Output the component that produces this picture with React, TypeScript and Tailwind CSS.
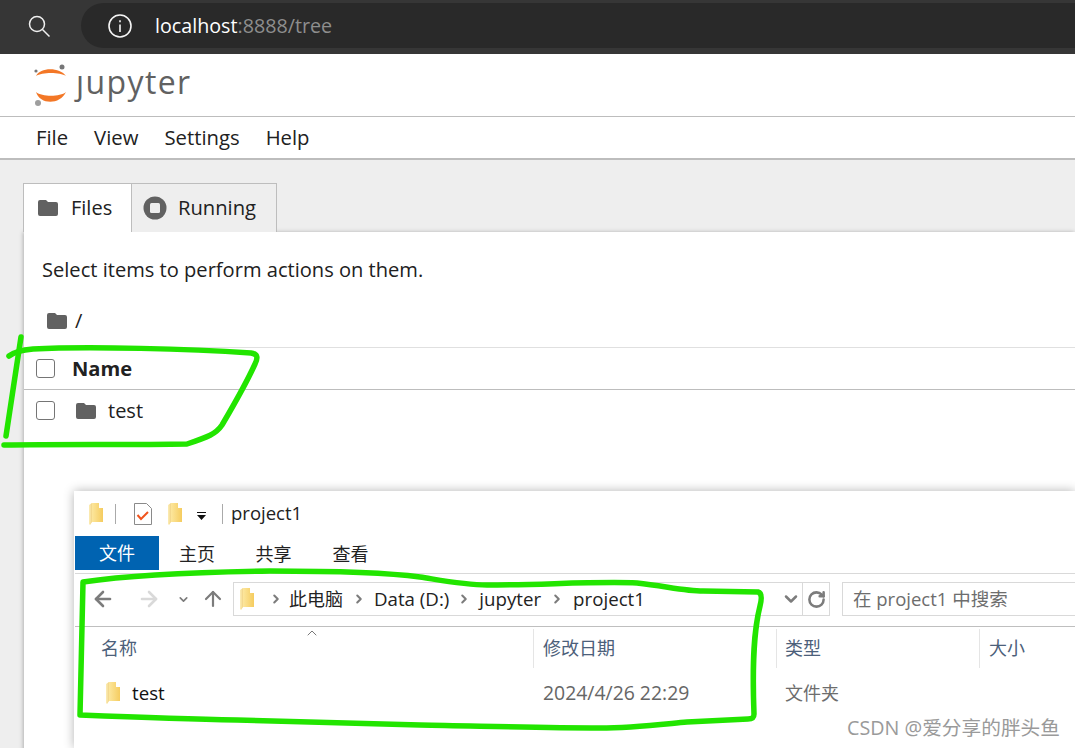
import { ChevronDown, ChevronRight, ChevronUp, RotateCw, ArrowLeft, ArrowRight, ArrowUp } from "lucide-react";

const sans = "font-['Open_Sans','Noto_Sans_CJK_SC',sans-serif]";

function JFolder({ className }: { className?: string }) {
  return (
    <svg viewBox="0 0 20 16" className={className}>
      <path
        fill="#616161"
        d="M2 0h6l2 2h8a2 2 0 0 1 2 2v10a2 2 0 0 1-2 2H2a2 2 0 0 1-2-2V2a2 2 0 0 1 2-2z"
      />
    </svg>
  );
}

function WinFolder({ className }: { className?: string }) {
  return (
    <svg viewBox="0 0 14 22" className={className}>
      <defs>
        <linearGradient id="winFolderFill" x1="0" x2="1" y1="0" y2="0">
          <stop offset="0" stopColor="#fce69c" />
          <stop offset="1" stopColor="#f5cc5f" />
        </linearGradient>
      </defs>
      <path fill="url(#winFolderFill)" d="M3 0h7v5h4v14H3z" />
      <path fill="#fbe9ae" d="M0 2l3-2v19l-2 3-1-1z" />
      <path fill="#e8c468" d="M3 0v19l-2 3 .6-3V1z" opacity="0.45" />
    </svg>
  );
}

function JupyterLogo() {
  return (
    <svg viewBox="0 0 34 42" className="h-[42px] w-[34px]">
      <path fill="#f37726" d="M2 12C6 3 26 3 32 12C26 8 8 8 2 12z" />
      <path fill="#f37726" d="M2 28C6 41 26 41 32 28C26 33 8 33 2 28z" />
      <circle cx="28" cy="3" r="2.5" fill="#767677" />
      <circle cx="2" cy="7" r="1.6" fill="#767677" />
      <circle cx="4" cy="39" r="3" fill="#9e9e9e" />
    </svg>
  );
}

function Check() {
  return <div className="h-[19px] w-[19px] rounded-[3px] border border-[#757575] bg-white" />;
}

function GreenMarks() {
  return (
    <svg viewBox="0 0 1075 748" className="pointer-events-none absolute left-0 top-0 h-[748px] w-[1075px]" fill="none" stroke="#22e500" strokeWidth="5.5" strokeLinecap="round" strokeLinejoin="round">
      <path d="M9 356C14 352 22 350 33 349C90 346 190 349 251 353C258 354 258 358 255 364C245 386 232 408 222 425C216 434 208 437 187 444C130 445 60 444 4 445" />
      <path d="M21 337L6 436" />
      <path d="M80 715L83 582C130 575 200 572 270 571C340 571 390 573 420 577C445 581 465 585 487 585C540 585 600 581 637 583C665 586 685 591 703 591L758 592C762 593 762 598 760 606C754 630 752 660 754 714C754 718 752 719 748 719C725 720 705 721 687 722C655 725 630 728 600 728C540 728 480 726 420 725C350 723 290 722 237 720C180 719 130 717 80 715z" />
    </svg>
  );
}

function Explorer() {
  return (
    <div className="absolute left-[74px] top-[491px] flex h-[257px] w-[1001px] flex-col bg-white pl-px shadow-[0_0_10px_rgba(0,0,0,0.3)] font-['Open_Sans','Noto_Sans_CJK_SC',sans-serif] text-[18px] text-[#222]">
      <div className="flex h-[45px] items-center pl-[14px]">
        <WinFolder className="h-[22px] w-[14px]" />
        <div className="ml-[12px] h-5 w-px bg-[#aaa]" />
        <svg viewBox="0 0 18 22" className="ml-[18px] h-[22px] w-[18px]">
          <path fill="#fff" stroke="#8a8a8a" d="M.5.5h12l5 5v16H.5z" />
          <path fill="none" stroke="#f0541e" strokeWidth="2" d="M3.5 12l3.5 4L14 9" />
        </svg>
        <WinFolder className="ml-4 h-[22px] w-[14px]" />
        <svg viewBox="0 0 10 8" className="ml-[15px] mt-1 h-2 w-[10px]">
          <path d="M0 0h9v1H0zM0 3h9L4.5 8z" fill="#111" />
        </svg>
        <div className="ml-[15px] h-5 w-px bg-[#aaa]" />
        <span className="ml-2 text-[18.5px] leading-none">project1</span>
      </div>
      <div className="flex h-[34px] items-stretch">
        <div className="flex w-[84px] items-center justify-center bg-[#0063b1] text-white">文件</div>
        <div className="flex w-[76px] items-center justify-center pt-[2px]">主页</div>
        <div className="flex w-[77px] items-center justify-center pt-[2px]">共享</div>
        <div className="flex w-[77px] items-center justify-center pt-[2px]">查看</div>
      </div>
      <div className="mt-[3px] flex h-[54px] items-start border-y border-[#d9d9d9] border-b-[#bfbfbf] pt-[8px]">
        <div className="flex h-[34px] w-[158px] items-center pl-[16px]">
          <ArrowLeft size={24} strokeWidth={2.6} className="text-[#7c7c7c]" />
          <ArrowRight size={24} strokeWidth={2.6} className="ml-[22px] text-[#d9d9d9]" />
          <ChevronDown size={13} strokeWidth={3} className="ml-[16px] text-[#7c7c7c]" />
          <ArrowUp size={24} strokeWidth={2.2} className="ml-[11px] text-[#7c7c7c]" />
        </div>
        <div className="flex h-[34px] w-[570px] items-center border border-[#d9d9d9] pl-[6px]">
          <WinFolder className="h-[22px] w-[14px]" />
          <ChevronRight size={14} strokeWidth={3.5} className="ml-[15px] text-[#7c7c7c]" />
          <span className="ml-[6px]">此电脑</span>
          <ChevronRight size={14} strokeWidth={3.5} className="ml-[9px] text-[#7c7c7c]" />
          <span className="ml-[8px] text-[18.7px]">Data (D:)</span>
          <ChevronRight size={14} strokeWidth={3.5} className="ml-[8px] text-[#7c7c7c]" />
          <span className="ml-[8px] text-[18.7px]">jupyter</span>
          <ChevronRight size={14} strokeWidth={3.5} className="ml-[9px] text-[#7c7c7c]" />
          <span className="ml-[9px] text-[18.7px]">project1</span>
          <ChevronDown size={20} strokeWidth={3} className="ml-auto mr-[1px] text-[#7c7c7c]" />
        </div>
        <div className="flex h-[34px] w-[27px] items-center justify-center border border-l-0 border-[#d9d9d9]">
          <RotateCw size={19} strokeWidth={3.2} className="text-[#7c7c7c]" />
        </div>
        <div className="ml-3 flex h-[34px] flex-1 items-center border border-r-0 border-[#d9d9d9] pl-[10px] text-[18.5px] text-[#6d6d6d]">在 project1 中搜索</div>
      </div>
      <div className="relative grid h-[41px] grid-cols-[458px_243px_203px_1fr] items-stretch pt-[2px] text-[#4c607a]">
        <ChevronUp size={16} strokeWidth={1.2} className="absolute left-[229px] -top-[2px] text-[#555]" />
        <div className="flex items-center pl-[26px]">名称</div>
        <div className="flex items-center border-l border-[#e5e5e5] pl-[9px]">修改日期</div>
        <div className="flex items-center border-l border-[#e5e5e5] pl-[8px]">类型</div>
        <div className="flex items-center border-l border-[#e5e5e5] pl-[9px]">大小</div>
      </div>
      <div className="grid h-[50px] grid-cols-[458px_243px_203px_1fr] items-center text-[#6d6d6d]">
        <div className="flex items-center pl-[31px] text-[18.7px] text-[#111]">
          <WinFolder className="h-[22px] w-[14px]" />
          <span className="ml-[12px]">test</span>
        </div>
        <div className="pl-[10px] text-[19.4px] text-[#666]">2024/4/26 22:29</div>
        <div className="pl-[9px]">文件夹</div>
        <div />
      </div>
    </div>
  );
}

export default function App() {
  return (
    <div className={`relative h-[748px] w-[1075px] overflow-hidden bg-[#eeeeee] ${sans}`}>
      <div className="h-[54px] bg-[#363636] pl-[28px] pt-[3px]">
        <div className="flex items-center">
          <svg viewBox="0 0 22 22" className="mt-[1px] h-[22px] w-[22px]" fill="none" stroke="#f0f0f0" strokeWidth="1.5">
            <circle cx="9" cy="9" r="7.5" />
            <path d="M14.5 14.5L21.5 21.5" />
          </svg>
          <div className="ml-[31px] flex h-[45px] flex-1 items-center rounded-l-[23px] bg-[#292929] pl-[27px]">
            <svg viewBox="0 0 24 24" className="h-6 w-6" fill="none" stroke="#f5f5f5" strokeWidth="1.6">
              <circle cx="12" cy="12" r="11" />
              <path d="M12 10.5v7.5M12 6.2v2" />
            </svg>
            <span className="ml-[23px] text-[19.7px] text-white">
              localhost<span className="text-[#8e8e8e]">:8888/tree</span>
            </span>
          </div>
        </div>
      </div>

      <div className="flex h-[62px] items-center bg-white pl-[34px]">
        <JupyterLogo />
        <span className="-mt-[6px] ml-[8px] text-[32px] leading-none tracking-[1.4px] text-[#616161]">ȷupyter</span>
      </div>

      <div className="flex h-[44px] items-center gap-[26px] border-y border-y-[#bdbdbd] border-b-2 bg-white pl-[36px] text-[20.3px] text-[#212121]">
        <span>File</span>
        <span>View</span>
        <span>Settings</span>
        <span>Help</span>
      </div>

      <div className="flex pl-[23px] pt-[23px] text-[20px]">
        <div className="flex h-[49px] w-[109px] items-center border border-b-0 border-[#bdbdbd] bg-white pl-[14px] text-[#212121]">
          <JFolder className="h-4 w-5" />
          <span className="ml-[13px]">Files</span>
        </div>
        <div className="flex h-[49px] w-[145px] items-center border border-b-0 border-l-0 border-[#bdbdbd] bg-[#eeeeee] pl-[11px] text-[#212121]">
          <svg viewBox="0 0 24 24" className="h-6 w-6">
            <circle cx="12" cy="12" r="11.5" fill="#616161" />
            <rect x="7" y="7" width="10" height="10" rx="1.5" fill="#eee" />
          </svg>
          <span className="-mt-[2px] ml-[11px] text-[20.2px]">Running</span>
        </div>
      </div>

      <div className="ml-[24px] h-[520px] bg-white text-[20.1px] text-[#212121] shadow-[-1px_0_4px_rgba(0,0,0,0.25)]">
        <div className="pl-[18px] pt-[24px] leading-[28px]">Select items to perform actions on them.</div>
        <div className="mt-[24px] flex h-[26px] items-center pl-[23px]">
          <JFolder className="h-4 w-5" />
          <span className="ml-[8px]">/</span>
        </div>
        <div className="mt-[13px] flex h-[43px] items-center border-y border-t-[#e0e0e0] border-b-[#bdbdbd] pl-[12px]">
          <Check />
          <span className="ml-[17px] mt-[2px] font-bold">Name</span>
        </div>
        <div className="flex h-[41px] items-center pl-[12px]">
          <Check />
          <JFolder className="ml-[21px] h-4 w-5" />
          <span className="ml-[12px] text-[20px]">test</span>
        </div>
      </div>

      <Explorer />
      <GreenMarks />

      <div className="absolute bottom-[10px] right-[15px] text-[19.7px] leading-none text-[#9a9a9a]">CSDN @爱分享的胖头鱼</div>
    </div>
  );
}
